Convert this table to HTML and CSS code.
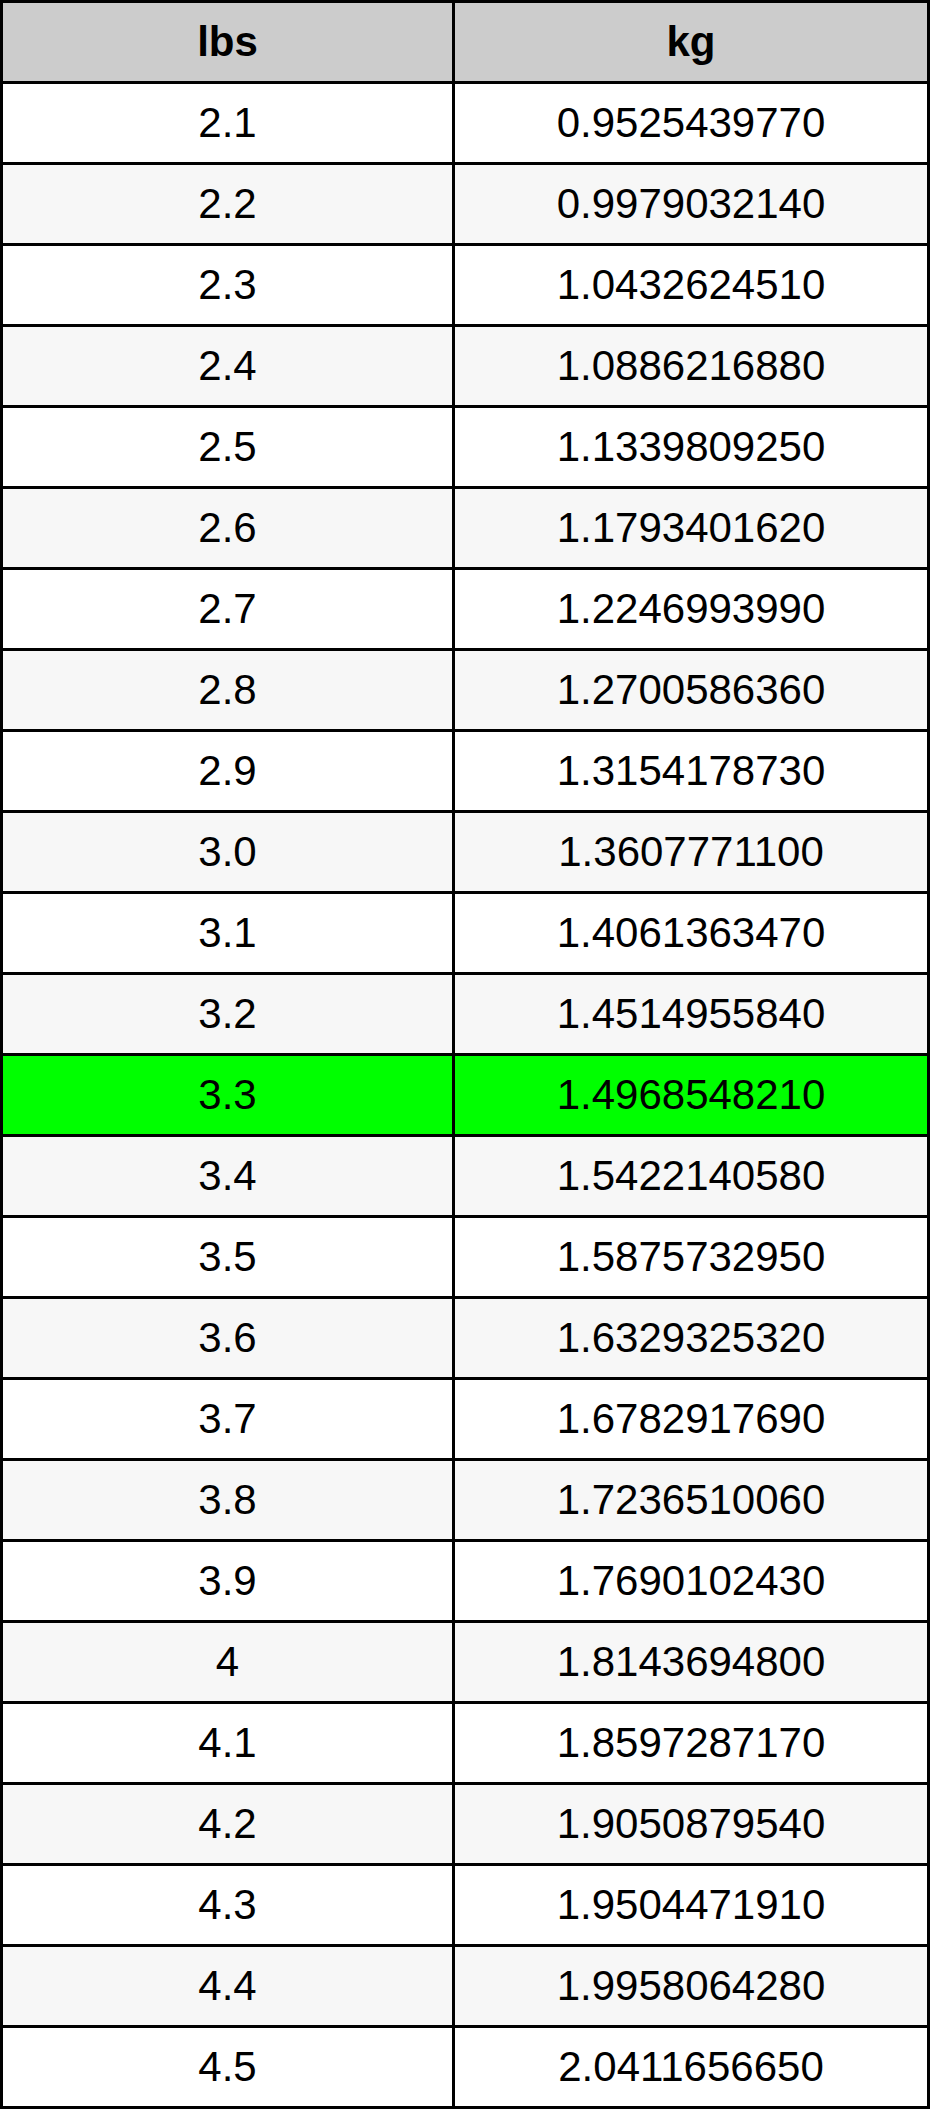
FILE: index.html
```html
<!DOCTYPE html>
<html>
<head>
<meta charset="utf-8">
<link rel="stylesheet" href="styles.css">
</head>
<body>
<table class="conv">
<thead>
<tr><th class="c1">lbs</th><th class="c2">kg</th></tr>
</thead>
<tbody>
<tr><td>2.1</td><td>0.9525439770</td></tr>
<tr class="alt"><td>2.2</td><td>0.9979032140</td></tr>
<tr><td>2.3</td><td>1.0432624510</td></tr>
<tr class="alt"><td>2.4</td><td>1.0886216880</td></tr>
<tr><td>2.5</td><td>1.1339809250</td></tr>
<tr class="alt"><td>2.6</td><td>1.1793401620</td></tr>
<tr><td>2.7</td><td>1.2246993990</td></tr>
<tr class="alt"><td>2.8</td><td>1.2700586360</td></tr>
<tr><td>2.9</td><td>1.3154178730</td></tr>
<tr class="alt"><td>3.0</td><td>1.3607771100</td></tr>
<tr><td>3.1</td><td>1.4061363470</td></tr>
<tr class="alt"><td>3.2</td><td>1.4514955840</td></tr>
<tr class="hl"><td>3.3</td><td>1.4968548210</td></tr>
<tr class="alt"><td>3.4</td><td>1.5422140580</td></tr>
<tr><td>3.5</td><td>1.5875732950</td></tr>
<tr class="alt"><td>3.6</td><td>1.6329325320</td></tr>
<tr><td>3.7</td><td>1.6782917690</td></tr>
<tr class="alt"><td>3.8</td><td>1.7236510060</td></tr>
<tr><td>3.9</td><td>1.7690102430</td></tr>
<tr class="alt"><td>4</td><td>1.8143694800</td></tr>
<tr><td>4.1</td><td>1.8597287170</td></tr>
<tr class="alt"><td>4.2</td><td>1.9050879540</td></tr>
<tr><td>4.3</td><td>1.9504471910</td></tr>
<tr class="alt"><td>4.4</td><td>1.9958064280</td></tr>
<tr><td>4.5</td><td>2.0411656650</td></tr>
</tbody>
</table>
</body>
</html>
```

FILE: styles.css
```css
html, body {
  margin: 0;
  padding: 0;
  background: #ffffff;
}

.conv {
  border-collapse: separate;
  border-spacing: 0;
  border-top: 3px solid #000;
  border-left: 3px solid #000;
  font-family: "Liberation Sans", Arial, sans-serif;
  font-size: 42px;
  color: #000;
  table-layout: fixed;
  width: 930px;
}

.conv th,
.conv td {
  border-right: 3px solid #000;
  border-bottom: 3px solid #000;
  height: 78px;
  padding: 0;
  text-align: center;
  vertical-align: middle;
  box-sizing: content-box;
  line-height: 1;
}

.conv th {
  background: #cccccc;
  font-weight: bold;
}

.conv .c1 {
  width: 449px;
}

.conv .c2 {
  width: 472px;
}

.conv tr.alt td {
  background: #f7f7f7;
}

.conv tr.hl td {
  background: #00ff00;
}
```
